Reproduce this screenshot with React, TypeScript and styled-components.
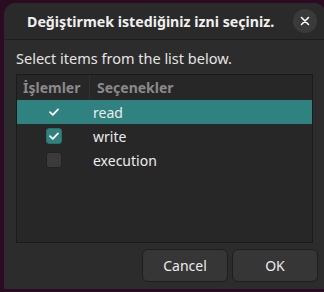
import styled, { createGlobalStyle } from "styled-components";

const GlobalStyle = createGlobalStyle`
  html, body {
    margin: 0;
    padding: 0;
    background: #2b0b22;
    font-family: "Noto Sans", "DejaVu Sans", sans-serif;
  }
`

const Dialog = styled.div`
  margin: 3px 0 0 4px;
  width: 322px;
  height: 286px;
  background: #2c2c2c;
  border-radius: 12px 12px 0 0;
  display: flex;
  flex-direction: column;
  overflow: hidden;
`

const Header = styled.div`
  height: 36px;
  flex: none;
  display: flex;
  align-items: center;
  justify-content: space-between;
  padding: 0 9px 0 23px;
  background: #2a2a2a;
  border-bottom: 1px solid #1d1d1d;
`

const Title = styled.h1`
  margin: 0;
  font-size: 14.2px;
  font-weight: 700;
  color: #f0f0f0;
`

const CloseButton = styled.button`
  width: 24px;
  height: 24px;
  border: none;
  border-radius: 50%;
  background: #3a3a3a;
  color: #ffffff;
  display: flex;
  align-items: center;
  justify-content: center;
  padding: 0;
`

const Body = styled.div`
  flex: 1;
  display: flex;
  flex-direction: column;
  padding: 8px 0 7px 12px;
`

const Label = styled.div`
  font-size: 14.5px;
  color: #e4e4e4;
  line-height: 20px;
  margin-bottom: 6px;
`

const ListBox = styled.div`
  flex: 1;
  margin-right: 13px;
  background: #272727;
  border: 1px solid #1b1b1b;
  display: flex;
  flex-direction: column;
`

const Row = styled.div<{ $selected?: boolean }>`
  display: grid;
  grid-template-columns: 72px 1fr;
  height: 24px;
  align-items: center;
  background: ${(p) => (p.$selected ? "#308280" : "transparent")};
  color: #ececec;
  font-size: 14px;
`

const HeadRow = styled(Row)`
  height: 25px;
  color: #8a8a8a;
  font-weight: 700;
`

const HeadCell = styled.div<{ $divider?: boolean }>`
  height: 100%;
  display: flex;
  align-items: center;
  padding-left: ${(p) => (p.$divider ? "7px" : "6px")};
  border-left: ${(p) => (p.$divider ? "1px solid #303030" : "none")};
`

const CheckCell = styled.div`
  display: flex;
  justify-content: center;
  padding-left: 1px;
`

const Box = styled.div<{ $checked: boolean; $flat?: boolean }>`
  width: 16px;
  height: 16px;
  box-sizing: border-box;
  border-radius: 3px;
  display: flex;
  align-items: center;
  justify-content: center;
  background: ${(p) => (p.$flat ? "transparent" : p.$checked ? "#308280" : "#3a3a3a")};
  border: ${(p) => (p.$flat ? "none" : p.$checked ? "1px solid #2a6e6c" : "1px solid #222222")};
`

const TextCell = styled.div`
  padding-left: 4px;
`

const Buttons = styled.div`
  display: flex;
  justify-content: flex-end;
  gap: 4px;
  margin-top: 6px;
  padding-right: 8px;
`

const Button = styled.button`
  width: 86px;
  height: 33px;
  border-radius: 6px;
  border: 1px solid #1e1e1e;
  background: #363636;
  color: #ececec;
  font-family: "Noto Sans", "DejaVu Sans", sans-serif;
  font-size: 14px;
`

const Check = () => (
  <svg width="12" height="12" viewBox="0 0 12 12">
    <path d="M2 6.2 L4.8 8.8 L10 3.4" fill="none" stroke="#ffffff" strokeWidth="1.8" strokeLinecap="round" strokeLinejoin="round" />
  </svg>
)

const items = [
  { name: "read", checked: true, selected: true },
  { name: "write", checked: true, selected: false },
  { name: "execution", checked: false, selected: false },
]

export default function App() {
  return (
    <>
      <GlobalStyle />
      <Dialog>
        <Header>
          <Title>Değiştirmek istediğiniz izni seçiniz.</Title>
          <CloseButton aria-label="Kapat">
            <svg width="10" height="10" viewBox="0 0 10 10">
              <path d="M1.5 1.5 L8.5 8.5 M8.5 1.5 L1.5 8.5" stroke="#ffffff" strokeWidth="1.6" strokeLinecap="round" />
            </svg>
          </CloseButton>
        </Header>
        <Body>
          <Label>Select items from the list below.</Label>
          <ListBox>
            <HeadRow>
              <HeadCell>İşlemler</HeadCell>
              <HeadCell $divider>Seçenekler</HeadCell>
            </HeadRow>
            {items.map((it) => (
              <Row key={it.name} $selected={it.selected}>
                <CheckCell>
                  <Box $checked={it.checked} $flat={it.selected}>
                    {it.checked && <Check />}
                  </Box>
                </CheckCell>
                <TextCell>{it.name}</TextCell>
              </Row>
            ))}
          </ListBox>
          <Buttons>
            <Button>Cancel</Button>
            <Button>OK</Button>
          </Buttons>
        </Body>
      </Dialog>
    </>
  )
}
